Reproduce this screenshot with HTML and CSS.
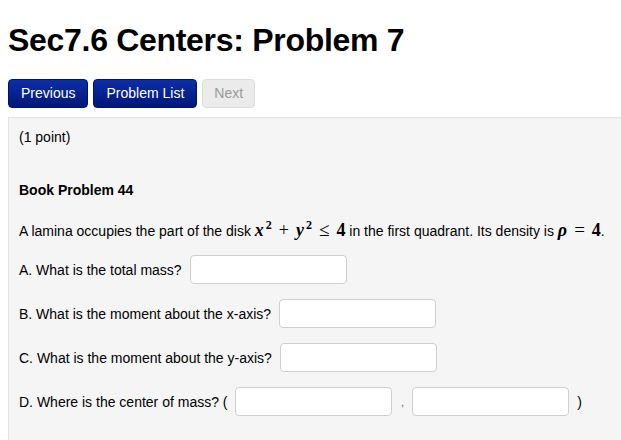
FILE: index.html
```html
<!DOCTYPE html>
<html lang="en">
<head>
    <meta charset="UTF-8">
    <title>Sec7.6 Centers: Problem 7</title>
    <link rel="stylesheet" href="styles.css">
</head>
<body>
    <h1 class="title">Sec7.6 Centers: Problem 7</h1>
    <div class="nav">
        <a class="btn" href="#">Previous</a>
        <a class="btn" href="#">Problem List</a>
        <span class="btn disabled">Next</span>
    </div>
    <div class="problem">
        <p class="points">(1 point)</p>
        <p class="book">Book Problem 44</p>
        <p class="text">A lamina occupies the part of the disk
            <span class="math"><i>x</i><sup>2</sup><span class="op">+</span><i>y</i><sup>2</sup><span class="rel">≤</span>4</span>
            in the first quadrant. Its density is
            <span class="math"><i>ρ</i><span class="rel">=</span>4</span>.</p>
        <div class="row">A. What is the total mass? <input class="answer" type="text"></div>
        <div class="row">B. What is the moment about the x-axis? <input class="answer" type="text"></div>
        <div class="row">C. What is the moment about the y-axis? <input class="answer" type="text"></div>
        <div class="row">D. Where is the center of mass? ( <input class="answer" type="text"><span class="comma">,</span><input class="answer" type="text">  )</div>
    </div>
</body>
</html>
```

FILE: styles.css
```css
* {
    margin: 0;
    padding: 0;
    box-sizing: border-box;
}
body {
    margin: 0 0 0 8px;
    font-family: "Liberation Sans", Arial, sans-serif;
    font-size: 14px;
    color: #000;
    background: #fff;
}

.title {
    padding-top: 22px;
    font-size: 32px;
    line-height: 36px;
    font-weight: bold;
    letter-spacing: -0.3px;
}

.nav {
    display: flex;
    gap: 5px;
    margin-top: 21px;
}
.btn {
    display: inline-block;
    height: 29px;
    line-height: 27px;
    padding: 0 12px;
    border: 1px solid #001466;
    border-radius: 4px;
    color: #fff;
    text-decoration: none;
    background: linear-gradient(#0c2ea6, #00177a);
}
.btn.disabled {
    padding: 0 11px;
    color: #9a9a9a;
    border-color: #dcdcdc;
    background: #ebebeb;
}

.problem {
    margin-top: 9px;
    margin-right: -20px;
    height: 340px;
    padding: 9px 10px;
    background: #f5f5f5;
    border: 1px solid #e3e3e3;
}
.points {
    line-height: 20px;
}
.book {
    margin-top: 33px;
    font-weight: bold;
    line-height: 20px;
}
.text {
    margin-top: 21px;
    height: 20px;
    line-height: 20px;
}
.math {
    font-family: "Liberation Serif", "Times New Roman", serif;
    font-size: 18px;
    font-weight: bold;
    line-height: 0;
}
.math i {
    font-style: italic;
}
.math sup {
    font-size: 12px;
    line-height: 0;
    margin-left: 2px;
}
.math .op {
    margin: 0 7px;
    font-weight: normal;
}
.math .rel {
    margin: 0 7px;
    font-weight: normal;
    font-size: 19px;
}

.row {
    display: flex;
    align-items: center;
    white-space: pre;
    margin-top: 14px;
    height: 29px;
}
.row + .row {
    margin-top: 15px;
}
.answer {
    width: 157px;
    height: 29px;
    margin-left: 4px;
    border: 1px solid #cfcfcf;
    border-radius: 4px;
    background: #fff;
    font-family: inherit;
    font-size: 14px;
    padding: 0 6px;
}
.comma {
    width: 20px;
    text-align: center;
    font-size: 11px;
    color: #666;
}
.comma + .answer {
    margin-left: 0;
}
```
